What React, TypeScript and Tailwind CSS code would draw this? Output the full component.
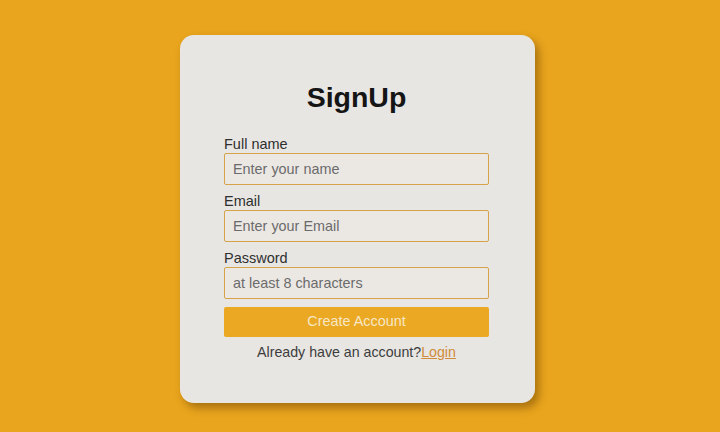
import { useState } from "react";

export default function App() {
  const [name, setName] = useState("");
  const [email, setEmail] = useState("");
  const [password, setPassword] = useState("");

  const inputClass =
    "w-full h-[32px] px-[8px] border border-[#d6a24a] rounded-[2px] bg-[#ebe8e4] text-[14.4px] text-[#333] placeholder:text-[#6b6b6b] outline-none";

  return (
    <div
      className="w-[720px] h-[432px] bg-[#e9a51d] flex items-start justify-center pt-[35px] pr-[5px]"
      style={{ fontFamily: '"Liberation Sans", Arial, sans-serif' }}
    >
      <div className="w-[355px] h-[368px] bg-[#e8e6e3] rounded-[14px] shadow-[4px_5px_8px_rgba(90,50,0,0.45)] pl-[44px] pr-[46px] pt-[44px]">
        <h1 className="text-[28.5px] leading-[36px] font-bold text-[#151515] text-center mb-[20px]">SignUp</h1>

        <form className="flex flex-col" onSubmit={(e) => e.preventDefault()}>
          <label className="text-[14.5px] leading-[18px] text-[#2f2f2f]">Full name</label>
          <input className={inputClass} placeholder="Enter your name" value={name} onChange={(e) => setName(e.target.value)} />

          <label className="text-[14.5px] leading-[18px] text-[#2f2f2f] mt-[7px]">Email</label>
          <input className={inputClass} placeholder="Enter your Email" value={email} onChange={(e) => setEmail(e.target.value)} />

          <label className="text-[14.5px] leading-[18px] text-[#2f2f2f] mt-[7px]">Password</label>
          <input
            className={inputClass}
            type="password"
            placeholder="at least 8 characters"
            value={password}
            onChange={(e) => setPassword(e.target.value)}
          />

          <button
            type="submit"
            className="mt-[8px] h-[30px] w-full rounded-[2px] bg-[#eaa823] text-[#f7e7c6] text-[14.4px]"
          >
            Create Account
          </button>

          <p className="mt-[6px] text-center text-[14.2px] leading-[18px] text-[#3d3d3d]">
            Already have an account?
            <a href="#" className="text-[#d08c3a] underline">
              Login
            </a>
          </p>
        </form>
      </div>
    </div>
  );
}
